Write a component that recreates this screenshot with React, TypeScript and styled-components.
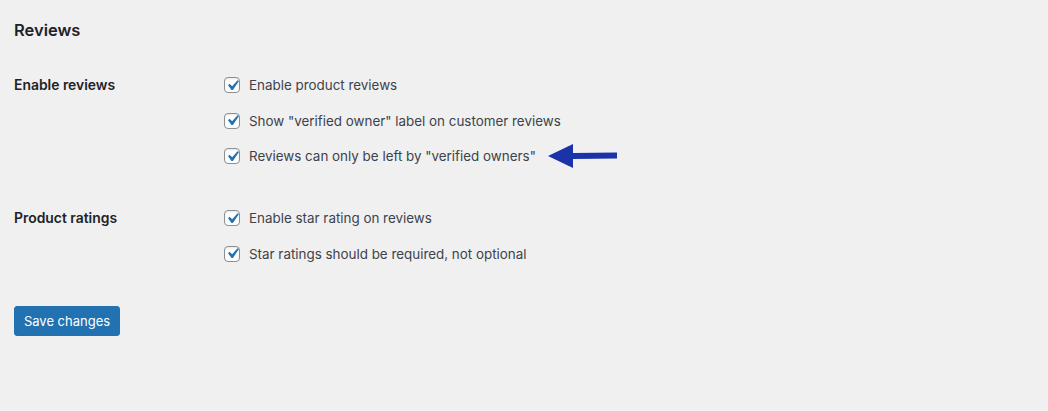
import React from 'react';
import styled, { createGlobalStyle } from 'styled-components';

const GlobalStyle = createGlobalStyle`
  html, body {
    margin: 0;
    padding: 0;
    background: #f0f0f1;
  }
  body {
    font-family: Inter, "Noto Sans", "Liberation Sans", sans-serif;
    font-size: 13.4px;
    color: #3c434a;
  }
`;

const Page = styled.div`
  padding: 18px 14px 40px;
  min-height: 353px;
`;

const Title = styled.h2`
  margin: 0 0 33px;
  font-size: 16.5px;
  line-height: 24px;
  font-weight: 600;
  color: #1d2327;
`;

const Section = styled.div`
  display: grid;
  grid-template-columns: 210px 1fr;
  margin-bottom: 42px;
`;

const RowLabel = styled.div`
  font-size: 13.9px;
  font-weight: 600;
  line-height: 20px;
  color: #1d2327;
`;

const Options = styled.div`
  display: flex;
  flex-direction: column;
  gap: 15.5px;
`;

const Option = styled.label`
  display: flex;
  align-items: center;
  height: 20px;
  line-height: 20px;
  color: #3c434a;
  cursor: pointer;
`;

const Box = styled.span`
  flex: none;
  width: 16px;
  height: 16px;
  margin-right: 9px;
  box-sizing: border-box;
  border: 1px solid #8c8f94;
  border-radius: 4px;
  background: #fff;
  display: flex;
  align-items: center;
  justify-content: center;
  overflow: visible;
  box-shadow: inset 0 1px 2px rgba(0, 0, 0, 0.1);

  svg {
    flex: none;
    margin: -3px;
  }
`;

const Pointer = styled.svg`
  flex: none;
  margin-left: 12px;
`;

const SaveButton = styled.button`
  display: block;
  width: 106px;
  height: 30px;
  padding: 0;
  border: 1px solid #2271b1;
  border-radius: 3px;
  background: #2271b1;
  color: #fff;
  font-family: inherit;
  font-size: 13px;
  line-height: 28px;
  white-space: nowrap;
  text-align: center;
  cursor: pointer;
`;

const Check = () => (
  <svg width="21" height="21" viewBox="0 0 20 20">
    <path d="M14.83 4.89l1.34.94-5.81 8.38H9.02L5.78 9.67l1.34-1.25 2.57 2.4z" fill="#2271b1" />
  </svg>
);

const Arrow = () => (
  <Pointer width="72" height="26" viewBox="0 0 72 26">
    <path d="M0 13 L25 1 L25 10 L69 9.5 L69 15.5 L25 16 L25 25 Z" fill="#1b33a8" />
  </Pointer>
);

type Item = { text: string; arrow?: boolean };

const sections: { label: string; items: Item[] }[] = [
  {
    label: 'Enable reviews',
    items: [
      { text: 'Enable product reviews' },
      { text: 'Show "verified owner" label on customer reviews' },
      { text: 'Reviews can only be left by "verified owners"', arrow: true },
    ],
  },
  {
    label: 'Product ratings',
    items: [
      { text: 'Enable star rating on reviews' },
      { text: 'Star ratings should be required, not optional' },
    ],
  },
];

const App: React.FC = () => (
  <Page>
    <GlobalStyle />
    <Title>Reviews</Title>
    {sections.map(section => (
      <Section key={section.label}>
        <RowLabel>{section.label}</RowLabel>
        <Options>
          {section.items.map(item => (
            <Option key={item.text}>
              <Box>
                <Check />
              </Box>
              {item.text}
              {item.arrow && <Arrow />}
            </Option>
          ))}
        </Options>
      </Section>
    ))}
    <SaveButton type="button">Save changes</SaveButton>
  </Page>
);

export default App;
